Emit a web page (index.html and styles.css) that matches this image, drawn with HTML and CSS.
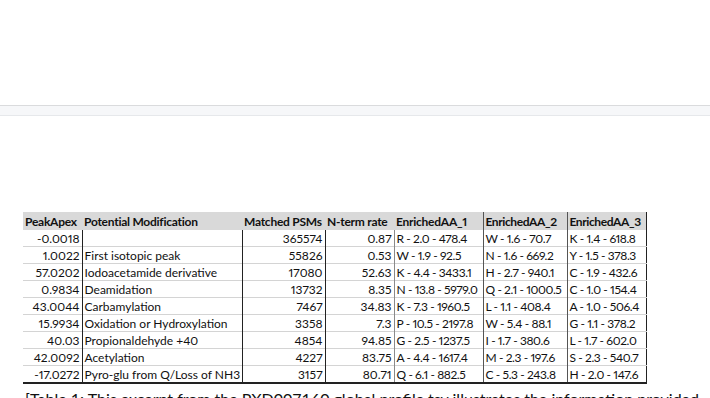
FILE: index.html
```html
<!DOCTYPE html>
<html>
<head>
    <meta name='viewport' content='width=device-width, initial-scale=1.0'>
    <title>Global profile excerpt</title>
    <link rel="stylesheet" href="styles.css">
</head>
<body>
    <div class='top-space'></div>
    <div class='divider'></div>
    <div class='content'>
        <table class='profile'>
            <colgroup>
                <col class='c-apex'>
                <col class='c-mod'>
                <col class='c-psm'>
                <col class='c-rate'>
                <col class='c-aa1'>
                <col class='c-aa2'>
                <col class='c-aa3'>
            </colgroup>
            <thead>
                <tr>
                    <th>PeakApex</th>
                    <th>Potential Modification</th>
                    <th>Matched PSMs</th>
                    <th>N-term rate</th>
                    <th>EnrichedAA_1</th>
                    <th class='sep-dark'>EnrichedAA_2</th>
                    <th class='sep-dark'>EnrichedAA_3</th>
                </tr>
            </thead>
            <tbody>
                <tr><td class='num'>-0.0018</td><td class='sep'></td><td class='num sep'>365574</td><td class='num sep'>0.87</td><td class='sep-mid'>R - 2.0 - 478.4</td><td class='sep-dark'>W - 1.6 - 70.7</td><td class='sep-dark'>K - 1.4 - 618.8</td></tr>
                <tr><td class='num'>1.0022</td><td class='sep'>First isotopic peak</td><td class='num sep'>55826</td><td class='num sep'>0.53</td><td class='sep-mid'>W - 1.9 - 92.5</td><td class='sep-dark'>N - 1.6 - 669.2</td><td class='sep-dark'>Y - 1.5 - 378.3</td></tr>
                <tr><td class='num'>57.0202</td><td class='sep'>Iodoacetamide derivative</td><td class='num sep'>17080</td><td class='num sep'>52.63</td><td class='sep-mid'>K - 4.4 - 3433.1</td><td class='sep-dark'>H - 2.7 - 940.1</td><td class='sep-dark'>C - 1.9 - 432.6</td></tr>
                <tr><td class='num'>0.9834</td><td class='sep'>Deamidation</td><td class='num sep'>13732</td><td class='num sep'>8.35</td><td class='sep-mid'>N - 13.8 - 5979.0</td><td class='sep-dark'>Q - 2.1 - 1000.5</td><td class='sep-dark'>C - 1.0 - 154.4</td></tr>
                <tr><td class='num'>43.0044</td><td class='sep'>Carbamylation</td><td class='num sep'>7467</td><td class='num sep'>34.83</td><td class='sep-mid'>K - 7.3 - 1960.5</td><td class='sep-dark'>L - 1.1 - 408.4</td><td class='sep-dark'>A - 1.0 - 506.4</td></tr>
                <tr><td class='num'>15.9934</td><td class='sep'>Oxidation or Hydroxylation</td><td class='num sep'>3358</td><td class='num sep'>7.3</td><td class='sep-mid'>P - 10.5 - 2197.8</td><td class='sep-dark'>W - 5.4 - 88.1</td><td class='sep-dark'>G - 1.1 - 378.2</td></tr>
                <tr><td class='num'>40.03</td><td class='sep'>Propionaldehyde +40</td><td class='num sep'>4854</td><td class='num sep'>94.85</td><td class='sep-mid'>G - 2.5 - 1237.5</td><td class='sep-dark'>I - 1.7 - 380.6</td><td class='sep-dark'>L - 1.7 - 602.0</td></tr>
                <tr><td class='num'>42.0092</td><td class='sep'>Acetylation</td><td class='num sep'>4227</td><td class='num sep'>83.75</td><td class='sep-mid'>A - 4.4 - 1617.4</td><td class='sep-dark'>M - 2.3 - 197.6</td><td class='sep-dark'>S - 2.3 - 540.7</td></tr>
                <tr><td class='num'>-17.0272</td><td class='sep'>Pyro-glu from Q/Loss of NH3</td><td class='num sep'>3157</td><td class='num sep'>80.71</td><td class='sep-mid'>Q - 6.1 - 882.5</td><td class='sep-dark'>C - 5.3 - 243.8</td><td class='sep-dark'>H - 2.0 - 147.6</td></tr>
            </tbody>
        </table>
        <p class='caption'>[Table 1: This excerpt from the PXD007160 global profile.tsv illustrates the information provided</p>
    </div>
</body>
</html>
```

FILE: styles.css
```css
body {
    margin: 0;
    background-color: white;
    font-family: Lato, "Open Sans", sans-serif;
    color: #111;
}
.top-space {
    height: 105px;
}
.divider {
    height: 9px;
    background-color: #f6f7f9;
    border-top: 1px solid #dadbdd;
    border-bottom: 1px solid #e6e8eb;
}
.content {
    padding: 96px 0 0 23px;
}
.profile {
    border-collapse: collapse;
    table-layout: fixed;
    width: 623px;
    font-size: 12px;
    font-variant-numeric: proportional-nums;
    border-right: 1px solid #222;
    border-bottom: 2px solid #222;
}
.c-apex { width: 59px; }
.c-mod { width: 160px; }
.c-psm { width: 83px; }
.c-rate { width: 69px; }
.c-aa1 { width: 89px; }
.c-aa2 { width: 84px; }
.c-aa3 { width: 79px; }
.profile th {
    background-color: #d9d9d9;
    font-weight: bold;
    text-align: left;
    height: 18px;
    padding: 0 2px;
    letter-spacing: -0.25px;
    white-space: nowrap;
}
.profile td {
    height: 16px;
    padding: 0 2px;
    border-top: 1px solid #d4d4d4;
    white-space: nowrap;
    overflow: hidden;
}
.profile tbody tr:first-child td {
    border-top: none;
}
.profile .num {
    text-align: right;
}
.profile .sep {
    border-left: 1px solid #222;
}
.profile .sep-mid {
    border-left: 1px solid #8a8a8a;
}
.profile .sep-mid,
.profile .sep-dark {
    letter-spacing: -0.4px;
}
.profile .sep-dark {
    border-left: 1px solid #555;
}
.caption {
    margin: 5px 0 0 2px;
    font-size: 16px;
}
```
